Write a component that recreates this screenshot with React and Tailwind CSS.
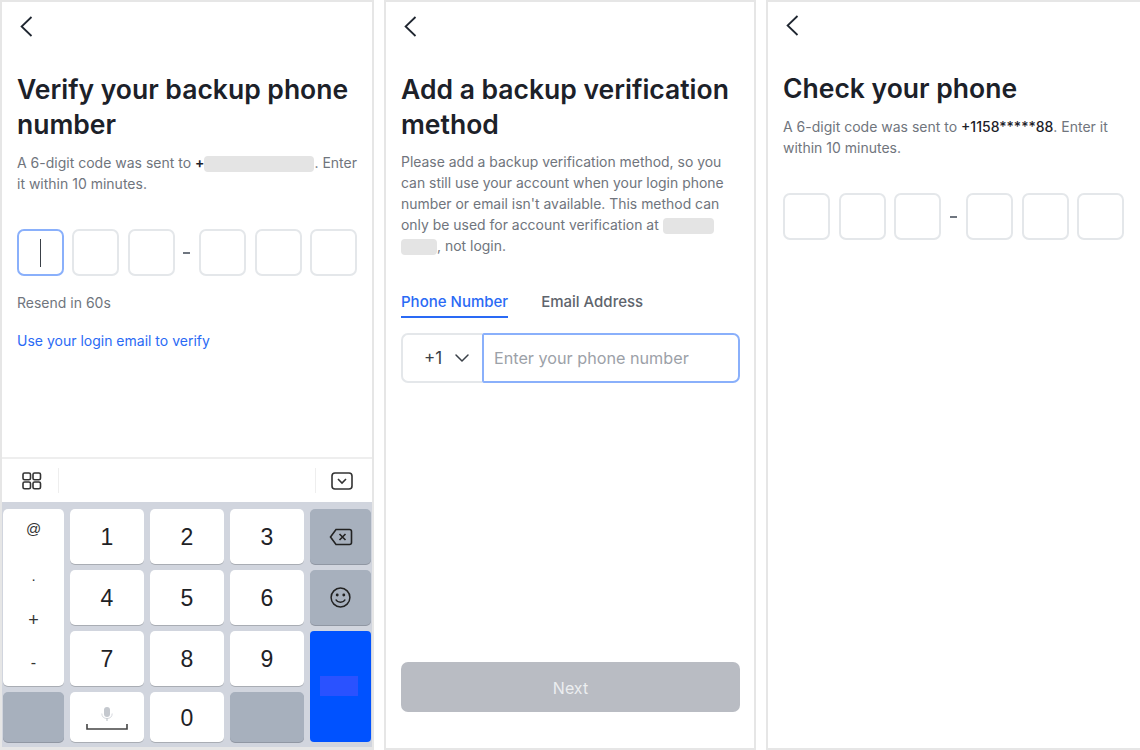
import { ChevronDown } from 'lucide-react';

function BackArrow() {
  return (
    <svg width="13" height="21" viewBox="0 0 13 21" fill="none" stroke="#1f2630" strokeWidth="1.8" className="block ml-[3px]">
      <path d="M11.5 1 L1.6 10.5 L11.5 20" />
    </svg>
  );
}

function Cell({ active }) {
  return (
    <div className={`w-[47px] h-[47px] rounded-[7px] border-2 flex items-center justify-center ${active ? 'border-[#8ab0fb]' : 'border-[#e4e7ea]'}`}>
      {active && <div className="w-px h-[28px] bg-[#3a4048]" />}
    </div>
  );
}

function CodeInput({ active }) {
  return (
    <div className="flex items-center">
      <div className="flex w-[158px] justify-between">
        <Cell active={active} />
        <Cell />
        <Cell />
      </div>
      <div className="w-[25px] flex justify-center"><div className="w-[7px] h-[2px] bg-[#6f7680]" /></div>
      <div className="flex w-[158px] justify-between">
        <Cell />
        <Cell />
        <Cell />
      </div>
    </div>
  );
}

function Key({ children, className = '' }) {
  return (
    <div className={`rounded-[5px] flex items-center justify-center pt-[2px] bg-white shadow-[0_1px_0_#a9adb4] text-[23px] text-[#1e2226] font-['Liberation_Sans',sans-serif] ${className}`}>
      {children}
    </div>
  );
}

function Keyboard() {
  return (
    <div>
      <div className="h-[45px] border-t-2 border-[#eeeeee] flex items-center bg-white">
        <div className="w-[56px] pl-[3px] flex justify-center">
          <svg width="20" height="18" viewBox="0 0 20 18" fill="none" stroke="#333" strokeWidth="1.6">
            <rect x="1" y="1" width="7.5" height="6.8" rx="1.6" />
            <rect x="11" y="1" width="7.5" height="6.8" rx="1.6" />
            <rect x="1" y="10" width="7.5" height="6.8" rx="1.6" />
            <rect x="11" y="10" width="7.5" height="6.8" rx="1.6" />
          </svg>
        </div>
        <div className="w-px h-[25px] bg-[#eeeeee]" />
        <div className="flex-1" />
        <div className="w-px h-[25px] bg-[#eeeeee]" />
        <div className="w-[56px] pr-[4px] flex justify-center">
          <svg width="22" height="18" viewBox="0 0 22 18" fill="none" stroke="#333" strokeWidth="1.6">
            <rect x="1" y="1" width="20" height="16" rx="3" />
            <path d="M7 7 L11 11 L15 7" />
          </svg>
        </div>
      </div>
      <div className="h-[245px] bg-[#d1d5de] px-px pt-[7px] grid grid-cols-[61px_74px_74px_74px_61px] grid-rows-[55px_55px_55px_50px] gap-[6px]">
        <div className="row-span-3 rounded-[5px] bg-white shadow-[0_1px_0_#a9adb4] relative text-[#333] font-['Liberation_Sans',sans-serif]">
          <span className="absolute left-0 right-0 text-center top-[9px] text-[15px]">@</span>
          <span className="absolute left-0 right-0 text-center top-[56px] text-[15px]">.</span>
          <span className="absolute left-0 right-0 text-center top-[98px] text-[18px]">+</span>
          <span className="absolute left-0 right-0 text-center top-[142px] text-[16px]">-</span>
        </div>
        <Key>1</Key>
        <Key>2</Key>
        <Key>3</Key>
        <div className="rounded-[5px] bg-[#a7b0bd] shadow-[0_1px_0_#9097a3] flex items-center justify-center">
          <svg width="24" height="18" viewBox="0 0 24 18" fill="none" stroke="#222" strokeWidth="1.6">
            <path d="M7 1.5 H20.5 a2 2 0 0 1 2 2 V14.5 a2 2 0 0 1 -2 2 H7 L1.5 9 Z" />
            <path d="M10.5 6 L16.5 12 M16.5 6 L10.5 12" />
          </svg>
        </div>
        <Key>4</Key>
        <Key>5</Key>
        <Key>6</Key>
        <div className="rounded-[5px] bg-[#a7b0bd] shadow-[0_1px_0_#9097a3] flex items-center justify-center">
          <svg width="21" height="21" viewBox="0 0 21 21" fill="none" stroke="#222" strokeWidth="1.5">
            <circle cx="10.5" cy="10.5" r="9.4" />
            <circle cx="7.2" cy="8" r="0.7" fill="#222" />
            <circle cx="13.8" cy="8" r="0.7" fill="#222" />
            <path d="M5.8 12.5 C7.5 16 13.5 16 15.2 12.5" />
          </svg>
        </div>
        <Key>7</Key>
        <Key>8</Key>
        <Key>9</Key>
        <div className="row-span-2 rounded-[4px] bg-[#0052ff] flex items-center justify-center">
          <div className="w-[38px] h-[20px] bg-[#2a52ff] mt-[-2px] mr-[3px]" />
        </div>
        <div className="rounded-[5px] bg-[#a7b0bd] shadow-[0_1px_0_#9097a3]" />
        <Key className="flex-col">
          <svg width="12" height="14" viewBox="0 0 12 14" fill="#c4c8ce">
            <rect x="3" y="0" width="6" height="10" rx="3" />
            <path d="M0.8 6.5 C0.8 10 3 11.5 6 11.5 C9 11.5 11.2 10 11.2 6.5" fill="none" stroke="#d6d9de" strokeWidth="1" />
            <rect x="5.4" y="11" width="1.2" height="3" />
          </svg>
          <svg width="42" height="6" viewBox="0 0 42 6" fill="none" stroke="#444" strokeWidth="1.6" className="mt-[3px]">
            <path d="M1 0 V5 H41 V0" />
          </svg>
        </Key>
        <Key>0</Key>
        <div className="rounded-[5px] bg-[#a7b0bd] shadow-[0_1px_0_#9097a3]" />
      </div>
    </div>
  );
}

const Blur = ({ className }) => <span className={`inline-block align-middle bg-[#e4e4e4] rounded-[4px] h-[16px] ${className}`} />;

export default function App() {
  return (
    <div className="w-[1140px] h-[750px] bg-white flex gap-2.5 overflow-hidden font-['Inter',sans-serif]">
      {/* verify */}
      <div className="w-[374px] h-[750px] border-2 border-b-[3px] border-[#e6e6e6] flex flex-col">
        <div className="flex-1 px-[15px] pt-[14px]">
          <BackArrow />
          <h1 className="mt-[35px] text-[26.5px] leading-[35px] font-semibold text-[#1c2129]">Verify your backup phone number</h1>
          <p className="mt-[10px] text-[14px] leading-[21px] text-[#70757d]">
            A 6-digit code was sent to <b className="text-[#1c2129] font-semibold">+</b><Blur className="w-[110px]" />. Enter it within 10 minutes.
          </p>
          <div className="mt-[35px]"><CodeInput active /></div>
          <p className="mt-[16px] text-[14px] leading-[21px] text-[#70757d]">Resend in 60s</p>
          <p className="mt-[17px] text-[14px] leading-[21px] text-[#2a6af5]">Use your login email to verify</p>
        </div>
        <Keyboard />
      </div>

      {/* backup method */}
      <div className="w-[372px] h-[750px] border-2 border-[#e6e6e6] flex flex-col px-[15px] pt-[14px] pb-[36px]">
        <BackArrow />
        <h1 className="mt-[35px] text-[26.5px] leading-[35px] font-semibold text-[#1c2129]">Add a backup verification method</h1>
        <p className="mt-[9px] text-[13.95px] leading-[21px] text-[#70757d]">
          Please add a backup verification method, so you can still use your account when your login phone number or email isn't available. This method can only be used for account verification at <Blur className="w-[51px]" /> <Blur className="w-[36px]" />, not login.
        </p>
        <div className="mt-[35px] flex gap-[33px] text-[15px] font-medium">
          <div className="pb-[3px] border-b-2 border-[#2a6af5] text-[#2a6af5] leading-[22px]">Phone Number</div>
          <div className="text-[#5e646c] leading-[22px]">Email Address</div>
        </div>
        <div className="mt-[15px] flex h-[50px] w-[339px]">
          <div className="w-[81px] border-2 border-r-0 border-[#e4e7ea] rounded-l-[7px] flex items-center pl-[21px] gap-[8px] text-[17px] text-[#3a4048]">
            <span className="pt-[2px]">+1</span>
            <ChevronDown size={24} strokeWidth={1.5} color="#3a4048" />
          </div>
          <div className="flex-1 border-2 border-[#8ab0fb] rounded-r-[7px] rounded-l-[2px] flex items-center px-[10px] text-[16.2px] text-[#9ca1a8]">Enter your phone number</div>
        </div>
        <div className="flex-1" />
        <div className="h-[50px] w-[339px] pt-px rounded-[7px] bg-[#b9bcc3] flex items-center justify-center text-[16px] text-[#eceef0]">Next</div>
      </div>

      {/* check phone */}
      <div className="w-[374px] h-[750px] border-2 border-[#e6e6e6] border-r-0 flex flex-col px-[15px] pt-[13px]">
        <BackArrow />
        <h1 className="mt-[35px] text-[26.5px] leading-[35px] font-semibold text-[#1c2129]">Check your phone</h1>
        <p className="mt-[10px] text-[14px] leading-[21px] text-[#70757d]">
          A 6-digit code was sent to <b className="text-[#1c2129] font-medium">+1158*****88</b>. Enter it within 10 minutes.
        </p>
        <div className="mt-[35px]"><CodeInput /></div>
      </div>
    </div>
  );
}
